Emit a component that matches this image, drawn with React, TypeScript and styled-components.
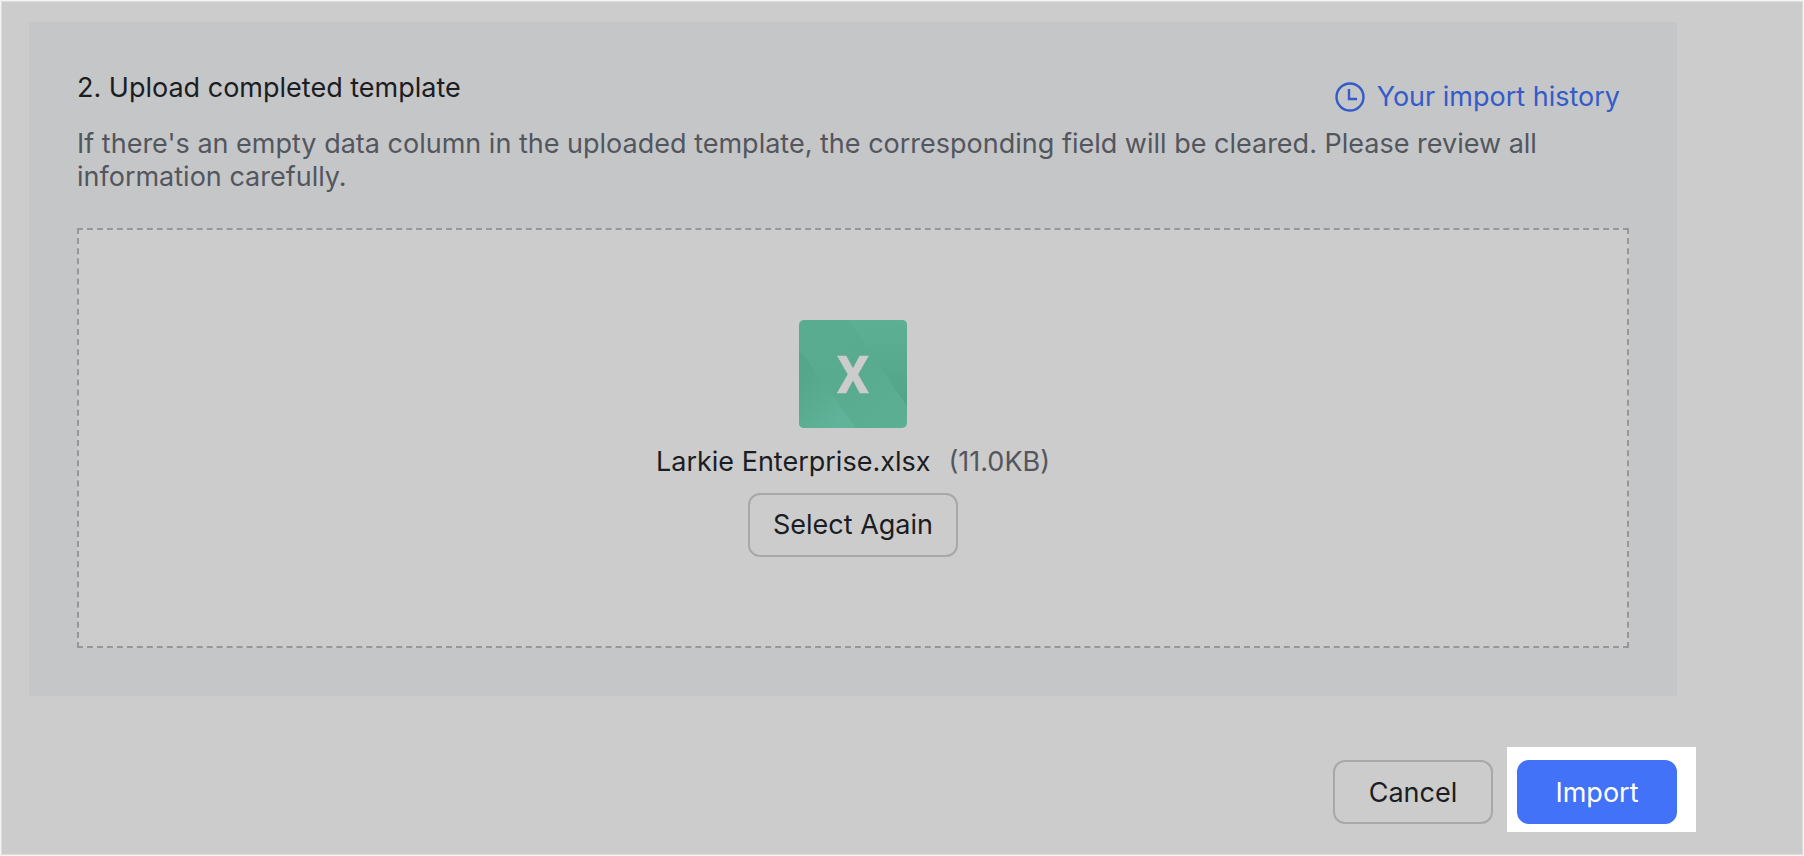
import React from "react";
import styled, { createGlobalStyle } from "styled-components";

const GlobalStyle = createGlobalStyle`
  * { box-sizing: border-box; }
  body {
    margin: 0;
    background: #f4f4f4;
    color: #1b1d22;
    font-family: Inter, "Liberation Sans", sans-serif;
    font-size: 27px;
    line-height: 33px;
  }
`;

const Page = styled.main`
  min-height: calc(100vh - 2px);
  margin: 1px;
  padding: 20px 125px 28px 27px;
  border: 1px solid #dedede;
  background: #cccccc;
  display: flex;
  flex-direction: column;
`;

const Panel = styled.section`
  padding: 48px;
  background: #c5c6c8;
`;

const PanelHeader = styled.header`
  display: flex;
  justify-content: space-between;
  align-items: flex-start;
  height: 57px;
`;

const Title = styled.h2`
  margin: 0;
  padding-top: 1px;
  font-size: 27px;
  font-weight: 400;
`;

const HistoryLink = styled.a`
  display: flex;
  align-items: center;
  gap: 12px;
  padding: 10px 9px 0;
  color: #345bc9;
  text-decoration: none;
`;

const Description = styled.p`
  margin: 0 0 35px;
  color: #53565d;
`;

const DropZone = styled.div`
  display: flex;
  flex-direction: column;
  align-items: center;
  justify-content: center;
  min-height: 420px;
  border: 2px dashed #96979a;
  background: #cccccc;
`;

const FileLine = styled.div`
  display: flex;
  gap: 18px;
  margin: 17px 0 15px;
`;

const FileSize = styled.span`
  color: #53565d;
`;

const Button = styled.button<{ $primary?: boolean; $wide?: boolean }>`
  width: ${(p) => (p.$wide ? "210px" : "160px")};
  height: 64px;
  padding: 0;
  border: 2px solid ${(p) => (p.$primary ? "#4272f8" : "#a7a8a8")};
  border-radius: 12px;
  background: ${(p) => (p.$primary ? "#4272f8" : "transparent")};
  color: ${(p) => (p.$primary ? "#ffffff" : "#1b1d22")};
  font: inherit;
`;

const Footer = styled.footer`
  display: flex;
  justify-content: flex-end;
  gap: 24px;
  margin-top: 64px;
`;

const Spotlight = styled.div`
  margin: -13px -19px -8px -10px;
  padding: 13px 19px 8px 10px;
  background: #ffffff;
`;

function ClockIcon() {
  return (
    <svg width="30" height="30" viewBox="0 0 30 30" fill="none" stroke="currentColor" strokeWidth="2.4" aria-hidden="true">
      <circle cx="15" cy="15" r="13.5" />
      <path d="M14 7v10h8" />
    </svg>
  );
}

function SheetIcon() {
  return (
    <svg width="108" height="108" viewBox="0 0 108 108" role="img" aria-label="Spreadsheet file">
      <defs>
        <clipPath id="tile"><rect width="108" height="108" rx="5" /></clipPath>
        <linearGradient id="corner" x1="0" y1="0" x2="0" y2="1">
          <stop offset="0" stopColor="#5eb095" />
          <stop offset="1" stopColor="#52a488" />
        </linearGradient>
        <linearGradient id="fold" gradientUnits="userSpaceOnUse" x1="0" y1="55" x2="42" y2="98">
          <stop offset="0" stopColor="#54a68a" />
          <stop offset="1" stopColor="#60b298" />
        </linearGradient>
        <linearGradient id="base" x1="0" y1="0" x2="1" y2="1">
          <stop offset="0" stopColor="#5aac91" />
          <stop offset="0.5" stopColor="#59ab90" />
          <stop offset="1" stopColor="#5caf93" />
        </linearGradient>
      </defs>
      <g clipPath="url(#tile)">
        <rect width="108" height="108" fill="url(#base)" />
        <path d="M49 0h59v86z" fill="url(#corner)" />
        <path d="M0 29L57 108H0z" fill="url(#fold)" />
      </g>
      <text x="54" y="73" textAnchor="middle" fontFamily="Roboto, sans-serif" fontWeight="700" fontSize="51" fill="#cccccc" stroke="#cccccc" strokeWidth="0.5">X</text>
    </svg>
  );
}

export default function App() {
  return (
    <>
      <GlobalStyle />
      <Page>
        <Panel>
          <PanelHeader>
            <Title>2. Upload completed template</Title>
            <HistoryLink href="#history">
              <ClockIcon />
              Your import history
            </HistoryLink>
          </PanelHeader>
          <Description>
            If there's an empty data column in the uploaded template, the corresponding field will be cleared. Please review all information carefully.
          </Description>
          <DropZone>
            <SheetIcon />
            <FileLine>
              <span>Larkie Enterprise.xlsx</span>
              <FileSize>(11.0KB)</FileSize>
            </FileLine>
            <Button type="button" $wide>Select Again</Button>
          </DropZone>
        </Panel>
        <Footer>
          <Button type="button">Cancel</Button>
          <Spotlight>
            <Button type="button" $primary>Import</Button>
          </Spotlight>
        </Footer>
      </Page>
    </>
  );
}
